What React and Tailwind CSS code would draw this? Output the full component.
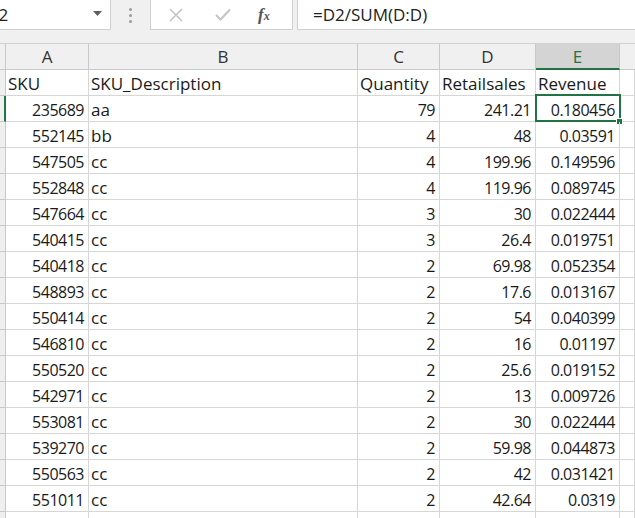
import React from "react";

const rows = [
  ["235689", "aa", "79", "241.21", "0.180456"],
  ["552145", "bb", "4", "48", "0.03591"],
  ["547505", "cc", "4", "199.96", "0.149596"],
  ["552848", "cc", "4", "119.96", "0.089745"],
  ["547664", "cc", "3", "30", "0.022444"],
  ["540415", "cc", "3", "26.4", "0.019751"],
  ["540418", "cc", "2", "69.98", "0.052354"],
  ["548893", "cc", "2", "17.6", "0.013167"],
  ["550414", "cc", "2", "54", "0.040399"],
  ["546810", "cc", "2", "16", "0.01197"],
  ["550520", "cc", "2", "25.6", "0.019152"],
  ["542971", "cc", "2", "13", "0.009726"],
  ["553081", "cc", "2", "30", "0.022444"],
  ["539270", "cc", "2", "59.98", "0.044873"],
  ["550563", "cc", "2", "42", "0.031421"],
  ["551011", "cc", "2", "42.64", "0.0319"],
  ["", "", "", "", ""],
];

const cell =
  "h-[26px] shrink-0 border-r border-b border-[#d6d6d6] flex items-center pt-[3px] overflow-hidden whitespace-nowrap";
const txt = "justify-start pl-[2px] text-[17px]";
const num = "justify-end pr-[4px] text-[16px] tracking-[-0.5px]";

function Row({ vals, selected, header }) {
  return (
    <div className="flex">
      <div
        className={`w-[6px] h-[26px] shrink-0 bg-[#efefef] border-b border-[#c8c8c8] ${
          selected ? "border-r-2 border-r-[#217346]" : "border-r border-r-[#c8c8c8]"
        }`}
      ></div>
      <div className={`${cell} w-[83px] ${header ? txt : num}`}>{vals[0]}</div>
      <div className={`${cell} w-[269px] ${txt}`}>{vals[1]}</div>
      <div className={`${cell} w-[82px] ${header ? txt : num}`}>{vals[2]}</div>
      <div className={`${cell} w-[96px] ${header ? txt : num}`}>{vals[3]}</div>
      <div className={`${cell} w-[84px] relative overflow-visible ${header ? txt : num}`}>
        {vals[4]}
        {selected && (
          <>
            <div className="absolute left-[-1px] top-[-2px] w-[86px] h-[28px] border-2 border-[#217346] pointer-events-none"></div>
            <div className="absolute left-[80px] top-[22px] w-[7px] h-[7px] bg-[#217346] border border-white"></div>
          </>
        )}
      </div>
      <div className={`${cell} flex-1 shrink`}></div>
    </div>
  );
}

function HeaderCell({ w, children, active }) {
  return (
    <div
      className={`${w} shrink-0 border-r border-[#c8c8c8] flex items-center justify-center pt-[1px] text-[17px] ${
        active ? "bg-[#d4d4d4] text-[#217346] border-b-2 border-b-[#217346]" : "border-b text-[#333333]"
      }`}
    >
      {children}
    </div>
  );
}

export default function App() {
  return (
    <div
      className="w-[635px] h-[518px] overflow-hidden bg-white text-[#1a1a1a]"
      style={{ fontFamily: "'Open Sans', 'Liberation Sans', sans-serif" }}
    >
      {/* formula bar */}
      <div className="h-[43px] bg-[#f1f0f0] flex items-start">
        <div className="w-[111px] h-[30px] shrink-0 bg-white border-r border-b border-[#d0d0d0] flex items-center relative overflow-hidden">
          <span className="ml-[-11px] text-[17px] text-[#222]">E2</span>
          <svg className="absolute left-[93px] top-[11px]" width="9" height="6" viewBox="0 0 9 6">
            <path d="M0 0 H9 L4.5 5 Z" fill="#5f5f5f" />
          </svg>
        </div>
        <div className="w-[39px] h-[30px] shrink-0 flex flex-col items-center justify-center gap-[3px]">
          <div className="w-[3px] h-[3px] rounded-full bg-[#9a9a9a]"></div>
          <div className="w-[3px] h-[3px] rounded-full bg-[#9a9a9a]"></div>
          <div className="w-[3px] h-[3px] rounded-full bg-[#9a9a9a]"></div>
        </div>
        <div className="w-[143px] h-[30px] shrink-0 bg-white border-x border-b border-[#d0d0d0] flex items-center">
          <svg className="ml-[18px]" width="14" height="14" viewBox="0 0 14 14">
            <path d="M1 1 L13 13 M13 1 L1 13" stroke="#c4c4c4" strokeWidth="1.6" />
          </svg>
          <svg className="ml-[32px]" width="16" height="13" viewBox="0 0 16 13">
            <path d="M1 7 L5.5 11.5 L15 1.5" stroke="#c4c4c4" strokeWidth="2" fill="none" />
          </svg>
          <span
            className="ml-[27px] text-[#555] italic font-bold text-[17px] leading-none"
            style={{ fontFamily: "'Liberation Serif', serif" }}
          >
            f<span className="text-[12px]">x</span>
          </span>
        </div>
        <div className="ml-[4px] flex-1 h-[30px] bg-white border-l border-b border-[#d0d0d0] flex items-center">
          <span className="ml-[15px] text-[17px] text-[#222]">=D2/SUM(D:D)</span>
        </div>
      </div>
      {/* column headers */}
      <div className="flex h-[27px] border-t border-[#d0d0d0] bg-[#f1f0f0]">
        <div className="w-[6px] shrink-0 border-r border-b border-[#c8c8c8]"></div>
        <HeaderCell w="w-[83px]">A</HeaderCell>
        <HeaderCell w="w-[269px]">B</HeaderCell>
        <HeaderCell w="w-[82px]">C</HeaderCell>
        <HeaderCell w="w-[96px]">D</HeaderCell>
        <HeaderCell w="w-[84px]" active>
          E
        </HeaderCell>
        <div className="flex-1 border-b border-[#c8c8c8]"></div>
      </div>
      <Row vals={["SKU", "SKU_Description", "Quantity", "Retailsales", "Revenue"]} header />
      {rows.map((r, i) => (
        <Row key={i} vals={r} selected={i === 0} />
      ))}
    </div>
  );
}
